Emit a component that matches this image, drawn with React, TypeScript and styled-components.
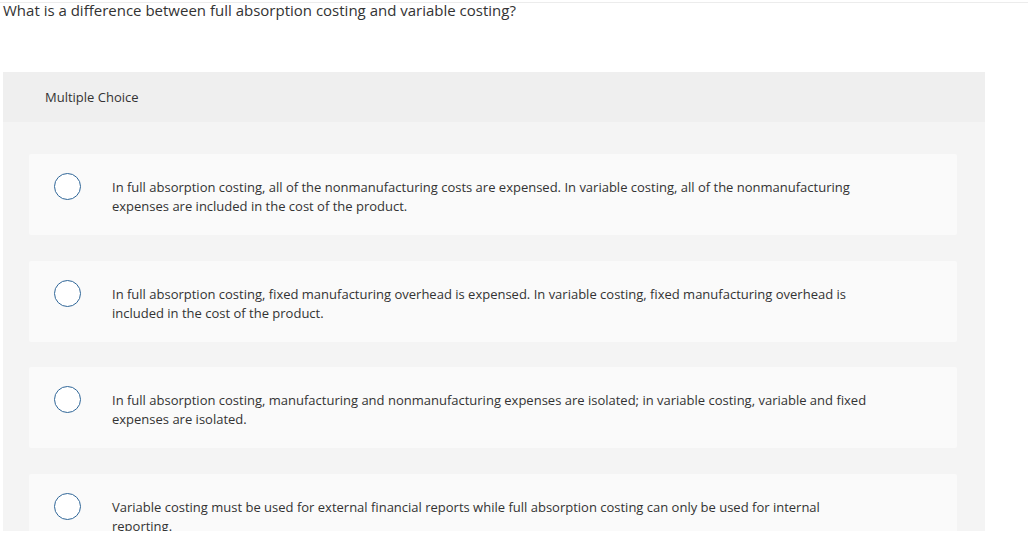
import React from "react";
import styled, { createGlobalStyle } from "styled-components";

const GlobalStyle = createGlobalStyle`
  html, body {
    margin: 0;
    padding: 0;
    background: #ffffff;
  }
  body {
    font-family: "Open Sans", "Lato", sans-serif;
    color: #333333;
  }
`;

const Page = styled.div`
  width: 1028px;
  border-top: 1px solid #ececec;
  margin-top: 2px;
  box-sizing: border-box;
`;

const Question = styled.p`
  margin: 0;
  padding: 0 0 0 3px;
  font-size: 15px;
  line-height: 14px;
  color: #333;
`;

const Panel = styled.section`
  margin: 55px 0 0 3px;
  width: 982px;
  height: 459px;
  overflow: hidden;
  background: #f4f4f4;
`;

const PanelHeader = styled.header`
  height: 50px;
  display: flex;
  align-items: center;
  padding-left: 42px;
  background: #efefef;
  font-size: 13px;
  color: #333;
`;

const ChoiceList = styled.div`
  display: flex;
  flex-direction: column;
  gap: 25.5px;
  padding: 32px 28px 0 26px;
`;

const Choice = styled.label`
  display: flex;
  align-items: flex-start;
  height: 81px;
  flex: none;
  box-sizing: border-box;
  padding: 19px 80px 0 25px;
  background: #fafafa;
  border-radius: 2px;
  cursor: pointer;
`;

const Radio = styled.span`
  flex: none;
  width: 27px;
  height: 27px;
  box-sizing: border-box;
  border: 1.5px solid #2f6698;
  border-radius: 50%;
  background: #ffffff;
`;

const ChoiceText = styled.span`
  margin: 5px 0 0 31px;
  font-size: 13px;
  line-height: 19px;
  color: #333;
`;

const choices = [
  "In full absorption costing, all of the nonmanufacturing costs are expensed. In variable costing, all of the nonmanufacturing expenses are included in the cost of the product.",
  "In full absorption costing, fixed manufacturing overhead is expensed. In variable costing, fixed manufacturing overhead is included in the cost of the product.",
  "In full absorption costing, manufacturing and nonmanufacturing expenses are isolated; in variable costing, variable and fixed expenses are isolated.",
  "Variable costing must be used for external financial reports while full absorption costing can only be used for internal reporting.",
];

const App = () => {
  return (
    <>
      <GlobalStyle />
      <Page>
        <Question>
          What is a difference between full absorption costing and variable
          costing?
        </Question>
        <Panel>
          <PanelHeader>Multiple Choice</PanelHeader>
          <ChoiceList>
            {choices.map((text) => (
              <Choice key={text}>
                <Radio />
                <ChoiceText>{text}</ChoiceText>
              </Choice>
            ))}
          </ChoiceList>
        </Panel>
      </Page>
    </>
  );
};

export default App;
